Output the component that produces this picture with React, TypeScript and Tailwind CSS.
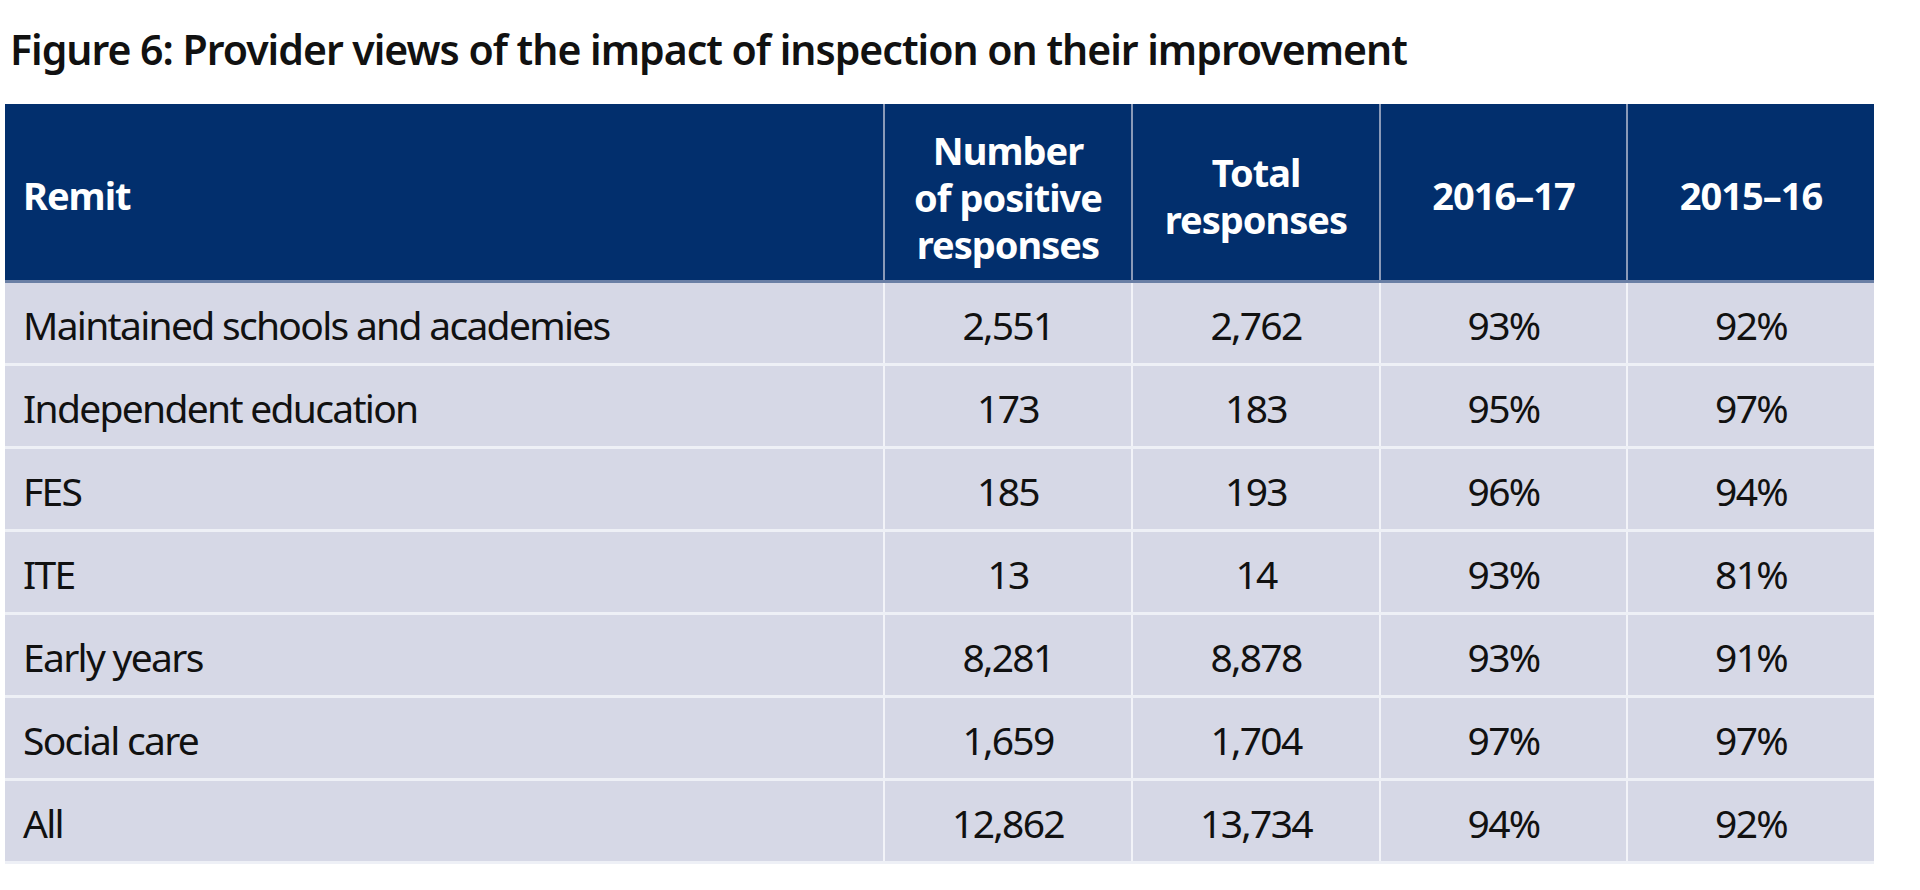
const ROWS = [
  { remit: "Maintained schools and academies", positive: "2,551", total: "2,762", y1: "93%", y2: "92%" },
  { remit: "Independent education", positive: "173", total: "183", y1: "95%", y2: "97%" },
  { remit: "FES", positive: "185", total: "193", y1: "96%", y2: "94%" },
  { remit: "ITE", positive: "13", total: "14", y1: "93%", y2: "81%" },
  { remit: "Early years", positive: "8,281", total: "8,878", y1: "93%", y2: "91%" },
  { remit: "Social care", positive: "1,659", total: "1,704", y1: "97%", y2: "97%" },
  { remit: "All", positive: "12,862", total: "13,734", y1: "94%", y2: "92%" },
];

const font = "font-['Noto_Sans','DejaVu_Sans_Condensed',sans-serif]";

function HeadLines({ lines }: { lines: string[] }) {
  return (
    <div className="flex flex-col items-center">
      {lines.map((line) => (
        <div key={line} className="leading-[47px] whitespace-nowrap">
          {line}
        </div>
      ))}
    </div>
  );
}

export default function App() {
  return (
    <div className={`min-h-[890px] w-[1920px] bg-white ${font}`}>
      <h1 className="pl-[10px] pt-[27px] text-[41px] leading-[44px] tracking-[-1px] font-semibold text-[#111]">
        Figure 6: Provider views of the impact of inspection on their improvement
      </h1>

      <table className="ml-[5px] mt-[33px] w-[1869px] table-fixed border-collapse">
        <colgroup>
          <col className="w-[879px]" />
          <col className="w-[248px]" />
          <col className="w-[248px]" />
          <col className="w-[247px]" />
          <col className="w-[247px]" />
        </colgroup>
        <thead>
          <tr className="h-[177px] bg-[#022f6d] text-white text-[38px] tracking-[-1px] font-bold border-b-[3px] border-[#6a7fa5]">
            <th className="pl-[18px] pt-[8px] text-left border-r-2 border-[#8a9ab8]">Remit</th>
            <th className="pt-[12px] text-center border-r-2 border-[#8a9ab8]">
              <HeadLines lines={["Number", "of positive", "responses"]} />
            </th>
            <th className="pt-[8px] text-center border-r-2 border-[#8a9ab8]">
              <HeadLines lines={["Total", "responses"]} />
            </th>
            <th className="pt-[8px] text-center border-r-2 border-[#8a9ab8]">2016–17</th>
            <th className="pt-[8px] text-center">2015–16</th>
          </tr>
        </thead>
        <tbody>
          {ROWS.map((row) => (
            <tr key={row.remit} className="h-[83px] bg-[#d6d8e6] text-[#111] text-[39px] leading-[47px] tracking-[-1.7px] border-b-[3px] border-[#eef0f6]">
              <td className="pl-[18px] pt-[4px] text-left border-r-2 border-[#f2f3f8]">{row.remit}</td>
              <td className="pt-[4px] text-center border-r-2 border-[#f2f3f8]">{row.positive}</td>
              <td className="pt-[4px] text-center border-r-2 border-[#f2f3f8]">{row.total}</td>
              <td className="pt-[4px] text-center border-r-2 border-[#f2f3f8]">{row.y1}</td>
              <td className="pt-[4px] text-center">{row.y2}</td>
            </tr>
          ))}
        </tbody>
      </table>
    </div>
  );
}
